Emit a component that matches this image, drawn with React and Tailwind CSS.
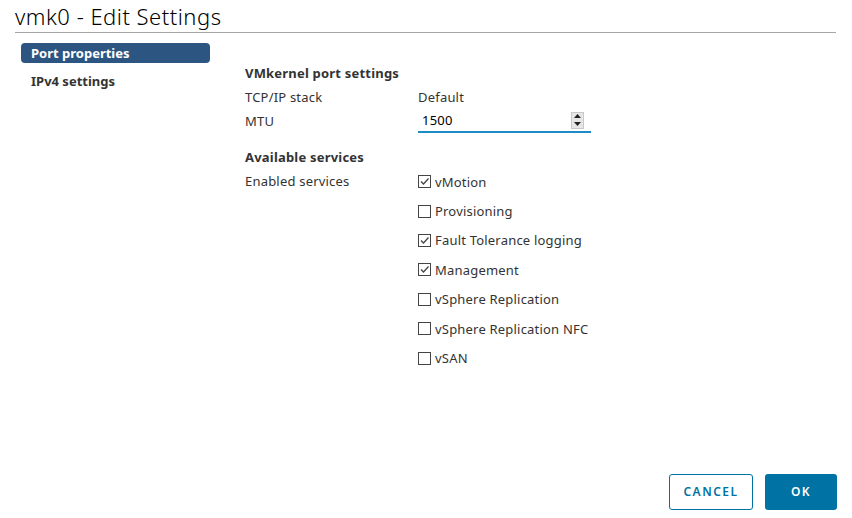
import React, { useState } from 'react';

const services = [
  { name: 'vMotion', on: true },
  { name: 'Provisioning', on: false },
  { name: 'Fault Tolerance logging', on: true },
  { name: 'Management', on: true },
  { name: 'vSphere Replication', on: false },
  { name: 'vSphere Replication NFC', on: false },
  { name: 'vSAN', on: false },
];

const Box = ({ on }) => (
  <span className="w-[13px] h-[13px] border border-[#444] bg-white flex items-center justify-center shrink-0">
    {on && (
      <svg width="11" height="11" viewBox="0 0 11 11">
        <path d="M2 5.5 L4.5 8 L9.5 2.5" fill="none" stroke="#444" strokeWidth="1.3" />
      </svg>
    )}
  </span>
);

const App = () => {
  const [mtu, setMtu] = useState('1500');

  return (
    <div className="w-[852px] h-[518px] bg-white text-[#333] relative overflow-hidden" style={{ fontFamily: '"Noto Sans", "Open Sans", sans-serif' }}>
      <div className="px-[15px] pt-[1px]">
        <h1 className="text-[22px] font-light leading-[30px] text-[#000] tracking-[0.5px]">vmk0 - Edit Settings</h1>
        <div className="h-px bg-[#a6a6a6] mt-[1px] mr-[1px]"></div>
      </div>

      <div className="flex pt-[10px]">
        {/* sidebar */}
        <nav className="w-[245px] pl-[21px] flex flex-col shrink-0">
          <div className="w-[189px] h-[20px] rounded-[4px] bg-[#2c5582] text-white text-[13px] font-bold leading-[20px] pl-[10px]">Port properties</div>
          <div className="h-[36px] leading-[36px] text-[13px] font-bold text-[#333] pl-[10px]">IPv4 settings</div>
        </nav>

        <main className="flex-1 pt-[20px] text-[13px] tracking-[0.2px]">
          <div className="font-bold leading-[20px]">VMkernel port settings</div>
          <div className="flex leading-[24px] mt-[2px]">
            <span className="w-[173px]">TCP/IP stack</span>
            <span>Default</span>
          </div>
          <div className="flex leading-[24px]">
            <span className="w-[173px]">MTU</span>
            <div className="w-[173px] h-[24px] border-b-2 border-[#1d8bc8] flex items-center justify-between pl-[4px] pr-[7px]">
              <input value={mtu} onChange={(e) => setMtu(e.target.value)} className="w-[100px] outline-none text-[13px] leading-[20px] text-[#000]" />
              <span className="w-[13px] h-[17px] bg-[#e6e6e6] border border-[#c8c8c8] flex flex-col items-center justify-around">
                <svg width="7" height="4" viewBox="0 0 7 4"><path d="M0 4 L3.5 0 L7 4Z" fill="#222" /></svg>
                <svg width="7" height="4" viewBox="0 0 7 4"><path d="M0 0 L3.5 4 L7 0Z" fill="#222" /></svg>
              </span>
            </div>
          </div>

          <div className="font-bold leading-[20px] mt-[14px]">Available services</div>
          <div className="flex">
            <span className="w-[173px] leading-[29.4px]">Enabled services</span>
            <div className="flex flex-col">
              {services.map((s) => (
                <label key={s.name} className="flex items-center gap-[4px] h-[29.4px]">
                  <Box on={s.on} />
                  <span className="leading-[20px] text-[#333]">{s.name}</span>
                </label>
              ))}
            </div>
          </div>
        </main>
      </div>

      <div className="absolute right-[15px] bottom-[8px] flex gap-[12px]">
        <button className="w-[84px] h-[36px] rounded-[3px] border border-[#0072a3] text-[#0072a3] text-[12px] font-semibold tracking-[1.5px] bg-white">CANCEL</button>
        <button className="w-[72px] h-[36px] rounded-[3px] bg-[#0072a3] text-white text-[12px] font-semibold tracking-[1.5px]">OK</button>
      </div>
    </div>
  );
};

export default App;
